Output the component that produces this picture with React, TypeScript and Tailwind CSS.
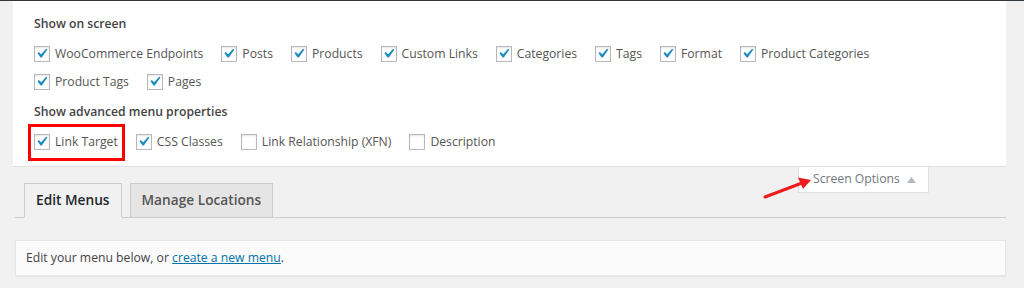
const showOnScreen = [
  ["WooCommerce Endpoints", "Posts", "Products", "Custom Links", "Categories", "Tags", "Format", "Product Categories"],
  ["Product Tags", "Pages"],
];

const advanced = [
  { label: "Link Target", checked: true },
  { label: "CSS Classes", checked: true },
  { label: "Link Relationship (XFN)", checked: false },
  { label: "Description", checked: false },
];

const Checkbox = ({ checked }: { checked: boolean }) => (
  <span className="flex h-[16px] w-[16px] shrink-0 items-center justify-center overflow-visible border border-[#b4b9be] bg-white shadow-[inset_0_1px_2px_rgba(0,0,0,0.1)]">
    {checked && (
      <svg className="-ml-[1px] -mt-[1px] shrink-0" width="19" height="19" viewBox="0 0 20 20">
        <path d="M14.83 4.89l1.34.94-5.81 8.38H9.02L5.78 9.67l1.34-1.25 2.57 2.4z" fill="#1e8cbe" />
      </svg>
    )}
  </span>
);

const Option = ({ label, checked }: { label: string; checked: boolean }) => (
  <label className="mr-[18px] flex h-[20px] items-center gap-[5px]">
    <Checkbox checked={checked} />
    <span>{label}</span>
  </label>
);

export default function App() {
  return (
    <div className="relative h-[288px] w-[1024px] overflow-hidden bg-[#f1f1f1] font-['Open_Sans',sans-serif] text-[12.2px] text-[#555]">
      <div className="h-[1px] bg-[#32373c]" />

      <div className="ml-[13px] h-[166px] w-[993px] border-b border-[#e1e1e1] bg-white pl-[21px] pt-[13px]">
        <h5 className="h-[20px] font-semibold leading-[20px] text-[#444]">Show on screen</h5>
        <div className="mt-[10px] flex flex-col gap-y-[8px]">
          {showOnScreen.map((row, i) => (
            <div key={i} className="flex">
              {row.map((item) => (
                <Option key={item} label={item} checked />
              ))}
            </div>
          ))}
        </div>
        <h5 className="mt-[10px] h-[20px] font-semibold leading-[20px] text-[#444]">
          Show advanced menu properties
        </h5>
        <div className="mt-[10px] flex">
          {advanced.map((item) => (
            <Option key={item.label} label={item.label} checked={item.checked} />
          ))}
        </div>
      </div>

      <div className="flex w-[1006px] justify-end pr-[77px]">
        <div className="flex h-[26px] w-[131px] items-center border-x border-b border-[#e1e1e1] bg-white pl-[14px] text-[#72777c]">
          Screen Options
          <svg className="ml-[7px]" width="9" height="6" viewBox="0 0 9 6">
            <path d="M0 6L4.5 0 9 6z" fill="#b4b9be" />
          </svg>
        </div>
      </div>

      <div className="-mt-[10px] ml-[15px] flex w-[991px] gap-[8px] border-b border-[#ccc] pl-[9px]">
        <div className="-mb-px flex h-[35px] items-center border border-[#ccc] border-b-[#f1f1f1] bg-[#f1f1f1] px-[11px] text-[13.7px] font-semibold text-[#23282d]">
          Edit Menus
        </div>
        <div className="flex h-[34px] items-center border border-b-0 border-[#ccc] bg-[#e5e5e5] px-[11px] text-[13.7px] font-semibold text-[#555]">
          Manage Locations
        </div>
      </div>

      <div className="ml-[15px] mt-[22px] flex h-[36px] w-[991px] items-center border border-[#e5e5e5] bg-[#fbfbfb] pl-[10px] text-[#444] shadow-[0_1px_1px_rgba(0,0,0,0.04)]">
        <span>
          Edit your menu below, or{" "}
          <a href="#" className="text-[#0073aa] underline">
            create a new menu
          </a>
          .
        </span>
      </div>

      <div className="pointer-events-none absolute left-[28px] top-[124px] h-[37px] w-[97px] border-[3px] border-[#f00]" />

      <svg className="pointer-events-none absolute left-[760px] top-[174px]" width="56" height="28" viewBox="0 0 56 28">
        <path d="M5 23L42 9" stroke="#ee1c1c" strokeWidth="3" strokeLinecap="round" />
        <path d="M51 6L38 3.5 43 15z" fill="#ee1c1c" />
      </svg>
    </div>
  );
}
